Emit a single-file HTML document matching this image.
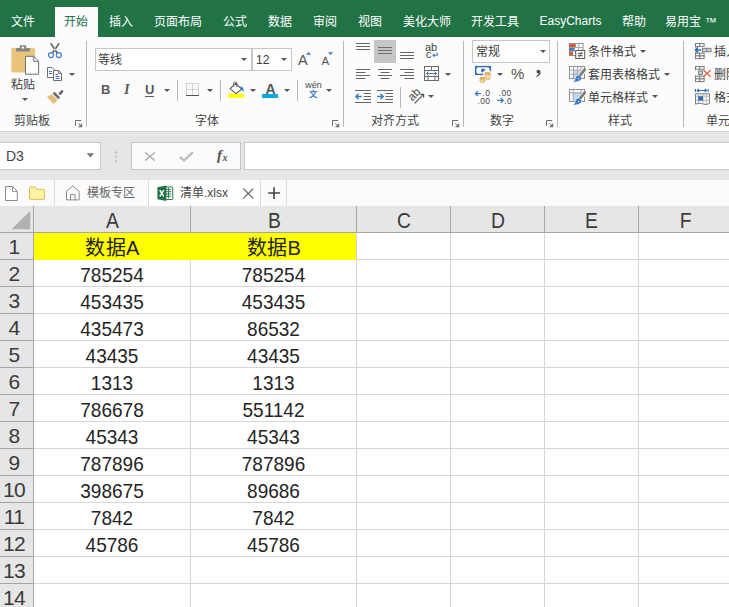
<!DOCTYPE html>
<html lang="zh-CN">
<head>
<meta charset="utf-8">
<title>清单.xlsx - Excel</title>
<style>
*{box-sizing:border-box;margin:0;padding:0}
html,body{width:729px;height:607px;overflow:hidden;background:#fff}
body{font-family:"Liberation Sans",sans-serif;font-size:12px;color:#262626;position:relative}
.abs,.abs>*{position:absolute}
#app{position:absolute;left:0;top:0;width:729px;height:607px;overflow:hidden}
#app div,#app span,#app svg{position:absolute}
/* title/tab bar */
#tabbar{left:0;top:0;width:729px;height:37px;background:#217346}
.tab{top:7px;height:30px;line-height:31px;color:#fff;font-size:12px;white-space:nowrap;text-align:center}
.tab.on{background:#fcfcfc;color:#217346}
/* ribbon */
#ribbon{left:0;top:37px;width:729px;height:94px;background:#fcfcfc}
.vsep{width:1px;background:#bababa}
.glabel{top:114px;height:14px;line-height:14px;font-size:12px;color:#444;white-space:nowrap;text-align:center}
.rtxt{font-size:12px;line-height:14px;color:#3c3c3c;white-space:nowrap}
.dec{font-size:8.5px;line-height:8px;color:#444;letter-spacing:0.4px}
.box{background:#fff;border:1px solid #c6c6c6}
.dd{width:0;height:0;border-left:3px solid transparent;border-right:3px solid transparent;border-top:3px solid #555}
/* formula bar */
#fbar{left:0;top:131px;width:729px;height:49px;background:#e6e6e6}
/* doc tabs */
#dtabs{left:0;top:180px;width:729px;height:26px;background:#fbfbfb}
/* grid */
#grid{left:0;top:206px;width:729px;height:401px;background:#fff}
.ch{top:0;height:27px;line-height:29px;padding-left:2px;background:#e6e6e6;border-right:1px solid #a6a6a6;border-bottom:1px solid #a6a6a6;font-size:22px;color:#3a3a3a;text-align:center}
#app .ch span{position:static;display:inline-block;transform:scaleX(0.88)}
.rh{left:-5px;width:39px;height:27px;line-height:28px;background:#e6e6e6;border-right:1px solid #a6a6a6;border-bottom:1px solid #a6a6a6;font-size:21px;letter-spacing:-0.6px;color:#3a3a3a;text-align:center}
.hl{left:34px;width:695px;height:1px;background:#d6d6d6}
.vl{top:27px;width:1px;height:374px;background:#d6d6d6}
.c{height:27px;line-height:30px;font-size:21px;color:#242424;text-align:center;white-space:nowrap;transform:scaleX(0.905)}
.c.h{font-size:20px;line-height:31px;transform:none;letter-spacing:0.4px;padding-left:1px}
.ca{left:34px;width:156px}
.cb{left:191px;width:165px}
</style>
</head>
<body>
<div id="app">

<!-- ===== tab bar ===== -->
<div id="tabbar">
  <div class="tab" style="left:0;width:47px;padding-right:1px">文件</div>
  <div class="tab on" style="left:55px;width:43px;padding-right:2px">开始</div>
  <div class="tab" style="left:99px;width:44px">插入</div>
  <div class="tab" style="left:143px;width:69px">页面布局</div>
  <div class="tab" style="left:212px;width:45px">公式</div>
  <div class="tab" style="left:257px;width:45px">数据</div>
  <div class="tab" style="left:302px;width:45px">审阅</div>
  <div class="tab" style="left:347px;width:45px">视图</div>
  <div class="tab" style="left:392px;width:69px">美化大师</div>
  <div class="tab" style="left:461px;width:68px">开发工具</div>
  <div class="tab" style="left:529px;width:83px;line-height:28px">EasyCharts</div>
  <div class="tab" style="left:612px;width:44px">帮助</div>
  <div class="tab" style="left:656px;width:70px">易用宝 ™</div>
</div>

<!-- ===== ribbon ===== -->
<div id="ribbon"></div>
<div id="rb" style="left:0;top:0;width:729px;height:131px">
<!-- clipboard group -->
<svg style="left:10px;top:43px" width="31" height="33" viewBox="0 0 31 33">
  <rect x="1.3" y="4.9" width="23.8" height="24.7" rx="1.6" fill="#ebc47c"/>
  <path d="M6 8.5V5.9Q6 4.9 7 4.9H9.7V3.3Q9.7 2.3 10.7 2.3H15.3Q16.3 2.3 16.3 3.3V4.9H19Q20 4.9 20 5.9V8.5Z" fill="#868686"/>
  <rect x="11.8" y="3.6" width="2.4" height="2" fill="#fcfcfc"/>
  <path d="M15.5 13.3H23.8L28.6 18.3V31.2H15.5Z" fill="#fff" stroke="#6e6e6e" stroke-width="1"/>
  <path d="M23.8 13.3V18.3H28.6" fill="none" stroke="#6e6e6e" stroke-width="1"/>
</svg>
<div class="rtxt" style="left:10px;top:78px;width:26px;text-align:center">粘贴</div>
<div class="dd" style="left:21.6px;top:98px"></div>
<!-- scissors -->
<svg style="left:47px;top:42px" width="17" height="17" viewBox="0 0 17 17">
  <path d="M2.9 1.6L4.3 0.9L11 10.4L9.4 11.2Z M12.9 1.6L11.5 0.9L4.8 10.4L6.4 11.2Z" fill="#5c5c5c"/>
  <circle cx="4" cy="13.1" r="2.5" fill="none" stroke="#3b7bc8" stroke-width="1.2"/>
  <circle cx="11.8" cy="13.1" r="2.5" fill="none" stroke="#3b7bc8" stroke-width="1.2"/>
</svg>
<!-- copy -->
<svg style="left:46px;top:66px" width="17" height="16" viewBox="0 0 17 16">
  <path d="M1.5 1.5H6.2L8.7 4V11.5H1.5Z" fill="#fff" stroke="#6e6e6e"/>
  <path d="M3 5.5H6M3 7.5H6" stroke="#3b7bc8" stroke-width="1"/>
  <path d="M7.5 4.5H12.6L15.5 7.4V14.5H7.5Z" fill="#fff" stroke="#6e6e6e"/>
  <path d="M12.6 4.5V7.4H15.5" fill="none" stroke="#6e6e6e"/>
  <path d="M9.5 8.5H12M9.5 10.5H13.5M9.5 12.5H13.5" stroke="#3b7bc8" stroke-width="1"/>
</svg>
<div class="dd" style="left:69px;top:73px"></div>
<!-- format painter -->
<svg style="left:46px;top:88px" width="19" height="17" viewBox="0 0 19 17">
  <path d="M12.4 5.4L15.2 2.5Q16.1 1.6 17 2.5Q17.9 3.4 17 4.3L14.2 7.2Z" fill="#5f5f5f"/>
  <path d="M6.6 5.6L8.6 3.7L14.2 9.4L12.2 11.3Z" fill="#6e6e6e"/>
  <path d="M6 6.2L11.6 11.9L7.6 16L0.9 8.7Z" fill="#e8bf7a"/>
</svg>
<div class="glabel" style="left:12px;top:114px;width:40px">剪贴板</div>
<svg class="lnch" style="left:75px;top:120px" width="8" height="8" viewBox="0 0 8 8"><path d="M0.5 5.8V0.5H6.2" fill="none" stroke="#6e6e6e" stroke-width="1"/><path d="M3.4 3.4L6 6" fill="none" stroke="#6e6e6e" stroke-width="1"/><path d="M7.2 3V7.2H3Z" fill="#6e6e6e"/></svg>
<div class="vsep" style="left:86px;top:41px;height:86px"></div>
<!-- font group -->
<div class="box" style="left:95px;top:48px;width:157px;height:23px"></div>
<div class="rtxt" style="left:98px;top:53px">等线</div>
<div class="dd" style="left:241px;top:58px"></div>
<div class="box" style="left:252px;top:48px;width:40px;height:23px"></div>
<div class="rtxt" style="left:256px;top:53px">12</div>
<div class="dd" style="left:281px;top:58px"></div>
<div class="rtxt" style="left:298px;top:51px;font-size:14.5px;line-height:18px;color:#555">A</div>
<svg style="left:306px;top:51px" width="6" height="4" viewBox="0 0 6 4"><path d="M0 3.8L2.6 0.9L5.2 3.8Z" fill="#3b7bc8"/></svg>
<div class="rtxt" style="left:321.5px;top:53px;font-size:11.5px;line-height:16px;color:#555">A</div>
<svg style="left:327.6px;top:52px" width="6" height="4" viewBox="0 0 6 4"><path d="M0 0.2L2.6 3.1L5.2 0.2Z" fill="#3b7bc8"/></svg>
<div class="rtxt" style="left:101px;top:82px;font-size:13px;line-height:16px;font-weight:bold;color:#5a5a5a">B</div>
<div class="rtxt" style="left:124px;top:81px;font-size:14.5px;line-height:17px;font-weight:bold;font-style:italic;font-family:'Liberation Serif',serif;color:#5a5a5a">I</div>
<div class="rtxt" style="left:145px;top:82px;font-size:13px;line-height:16px;font-weight:bold;color:#5a5a5a;border-bottom:1px solid #5a5a5a;height:15px">U</div>
<div class="dd" style="left:164px;top:89px"></div>
<div class="vsep" style="left:177px;top:80px;height:21px"></div>
<svg style="left:185px;top:82px" width="15" height="15" viewBox="0 0 15 15">
  <path d="M1.5 1.5H13.5M1.5 7.5H13.5M1.5 1.5V13.5M7.5 1.5V13.5M13.5 1.5V13.5" stroke="#a8a8a8" stroke-width="1" stroke-dasharray="1 1" fill="none"/>
  <path d="M1 13.5H14" stroke="#555" stroke-width="1"/>
</svg>
<div class="dd" style="left:207px;top:89px"></div>
<div class="vsep" style="left:220px;top:80px;height:21px"></div>
<svg style="left:227px;top:81px" width="18" height="18" viewBox="0 0 18 18">
  <rect x="0.9" y="12.7" width="16.2" height="4.1" fill="#ffff00"/>
  <path d="M8.7 2.3L14.6 8.2L9 12.6L3.2 7.7Z" fill="#fff" stroke="#555" stroke-width="1.1" stroke-linejoin="round"/>
  <path d="M6.6 5.6V2.2Q6.6 1.2 7.6 1.2H8.9Q9.9 1.2 9.9 2.2V6" fill="none" stroke="#666" stroke-width="1"/>
  <path d="M13.6 4.9Q17.3 6.4 16.7 10.9Q15.4 8.8 13.4 8.2Z" fill="#3b7bc8"/>
</svg>
<div class="dd" style="left:250px;top:89px"></div>
<div class="rtxt" style="left:265.5px;top:80px;font-size:14px;line-height:18px;font-weight:bold;color:#555">A</div>
<div style="left:262px;top:94px;width:16px;height:4px;background:#00a9ea"></div>
<div class="dd" style="left:284px;top:89px"></div>
<div class="vsep" style="left:297px;top:80px;height:21px"></div>
<div class="rtxt" style="left:305px;top:80px;font-size:9px;line-height:11px;color:#444;width:17px;text-align:center">wén</div>
<div class="rtxt" style="left:305px;top:90px;font-size:8.5px;line-height:9px;color:#3b7bc8;width:17px;text-align:center;font-weight:bold">文</div>
<div class="dd" style="left:326px;top:89px"></div>
<div class="glabel" style="left:187px;top:114px;width:40px">字体</div>
<svg class="lnch" style="left:332px;top:120px" width="8" height="8" viewBox="0 0 8 8"><path d="M0.5 5.8V0.5H6.2" fill="none" stroke="#6e6e6e" stroke-width="1"/><path d="M3.4 3.4L6 6" fill="none" stroke="#6e6e6e" stroke-width="1"/><path d="M7.2 3V7.2H3Z" fill="#6e6e6e"/></svg>
<div class="vsep" style="left:343px;top:41px;height:86px"></div>
<!-- alignment group -->
<div style="left:374px;top:40px;width:22px;height:23px;background:#c6c6c6"></div>
<svg style="left:344px;top:38px" width="120" height="92" viewBox="344 38 120 92">
  <g stroke="#666" stroke-width="1" fill="none">
  <path d="M356 43.5H370M356 46.5H370M356 49.5H370"/>
  <path d="M378 47.5H392M378 50.5H392M378 53.5H392" stroke="#6e6e6e"/>
  <path d="M400 52.5H414M400 55.5H414M400 58.5H414"/>
  <path d="M356 69.5H370M356 72.5H365.5M356 75.5H370M356 78.5H365.5"/>
  <path d="M378 69.5H392M380.5 72.5H389.5M378 75.5H392M380.5 78.5H389.5"/>
  <path d="M400 69.5H414M404.5 72.5H414M400 75.5H414M404.5 78.5H414"/>
  <path d="M355 90.5H371M363.5 93.5H371M363.5 96.5H371M363.5 99.5H371M355 102.5H371"/>
  <path d="M377 90.5H393M385.5 93.5H393M385.5 96.5H393M385.5 99.5H393M377 102.5H393"/>
  </g>
  <g stroke="#3b7bc8" stroke-width="1.4" fill="none">
  <path d="M361.8 96.5H355.8M358.6 93.7L355.8 96.5L358.6 99.3"/>
  <path d="M377 96.5H383.2M380.4 93.7L383.2 96.5L380.4 99.3"/>
  </g>
  <!-- merge -->
  <g stroke="#6a6a6a" stroke-width="1" fill="#fff">
  <rect x="424.5" y="66.5" width="14" height="14"/>
  <path d="M424.5 70.5H438.5M424.5 76.5H438.5M431.5 66.5V70.5M428 76.5V80.5M435 76.5V80.5" fill="none"/>
  </g>
  <path d="M426.5 73.5H436.5M428.5 71.5L426.5 73.5L428.5 75.5M434.5 71.5L436.5 73.5L434.5 75.5" stroke="#3b7bc8" stroke-width="1" fill="none"/>
  <!-- wrap arrow -->
  <path d="M437.2 52.6V55.2H433M434.6 53.6L433 55.2L434.6 56.8" stroke="#3b7bc8" stroke-width="1.1" fill="none"/>
  <!-- orientation arrow -->
  <path d="M414.6 103.4L423.3 94.7M420.4 94.4H423.6V97.6" stroke="#555" stroke-width="1.2" fill="none"/>
</svg>
<div class="rtxt" style="left:425px;top:42px;font-size:11px;line-height:11px;color:#444">ab</div>
<div class="rtxt" style="left:426px;top:49px;font-size:11px;line-height:11px;color:#444">c</div>
<div class="rtxt" style="left:408px;top:88.5px;font-size:11.5px;line-height:11px;color:#444;transform:rotate(-45deg);transform-origin:50% 50%">ab</div>
<div class="dd" style="left:445px;top:73px"></div>
<div class="vsep" style="left:400px;top:87px;height:21px"></div>
<div class="dd" style="left:428px;top:95px"></div>
<div class="glabel" style="left:365px;top:114px;width:60px">对齐方式</div>
<svg class="lnch" style="left:452px;top:120px" width="8" height="8" viewBox="0 0 8 8"><path d="M0.5 5.8V0.5H6.2" fill="none" stroke="#6e6e6e" stroke-width="1"/><path d="M3.4 3.4L6 6" fill="none" stroke="#6e6e6e" stroke-width="1"/><path d="M7.2 3V7.2H3Z" fill="#6e6e6e"/></svg>
<div class="vsep" style="left:463px;top:41px;height:86px"></div>
<!-- number group -->
<div class="box" style="left:472px;top:40px;width:78px;height:23px"></div>
<div class="rtxt" style="left:476px;top:45px">常规</div>
<div class="dd" style="left:540px;top:50px"></div>
<svg style="left:474px;top:65px" width="19" height="18" viewBox="0 0 19 18">
  <rect x="1.7" y="1.6" width="14.6" height="7.8" fill="#fff" stroke="#2f6db5" stroke-width="1.4"/>
  <path d="M1.7 1.6h2.6l-2.6 2.4zM16.3 1.6h-2.6l2.6 2.4zM1.7 9.4h2.6l-2.6 -2.4z" fill="#2f6db5"/>
  <circle cx="9" cy="5.4" r="2" fill="#2f6db5"/>
  <rect x="9.2" y="6.2" width="9" height="5" fill="#fcfcfc"/>
  <g fill="none" stroke="#e3b25c" stroke-width="1">
  <ellipse cx="13.6" cy="8.6" rx="3.1" ry="1" fill="#e3b25c"/>
  <path d="M10.2 10.4Q13.6 12.2 17 10.4M10.6 12.4Q13.6 13.9 17 12.4M12 14.2Q14 15 16 14.2"/>
  <ellipse cx="8.5" cy="13.5" rx="3" ry="1" fill="#e3b25c"/>
  <path d="M5.2 15.2Q8.5 17 11.8 15.2M6 16.9Q8.5 17.9 11 16.9"/>
  </g>
</svg>
<div class="dd" style="left:497px;top:73px"></div>
<div class="rtxt" style="left:511px;top:65px;font-size:15px;line-height:18px;color:#555">%</div>
<svg style="left:535px;top:69px" width="7" height="9" viewBox="0 0 7 9"><path d="M3.4 0.8Q5.6 0.8 5.6 3.2Q5.6 6.2 1.6 8L1.2 7.2Q3.4 6 3.5 4.6Q1.4 4.6 1.4 2.8Q1.4 0.8 3.4 0.8Z" fill="#555"/></svg>
<svg style="left:474px;top:89px" width="40" height="16" viewBox="474 89 40 16">
  <g stroke="#3b7bc8" stroke-width="1.3" fill="none">
  <path d="M481 93.6H475.4M477.8 91.2L475.4 93.6L477.8 96"/>
  <path d="M497.2 100.4H503.2M500.8 98L503.2 100.4L500.8 102.8"/>
  </g>
</svg>
<div class="rtxt dec" style="left:482.5px;top:89px">.0</div>
<div class="rtxt dec" style="left:477.4px;top:96.5px">.00</div>
<div class="rtxt dec" style="left:498.7px;top:89px">.00</div>
<div class="rtxt dec" style="left:504.2px;top:96.5px">.0</div>
<div class="glabel" style="left:482px;top:114px;width:40px">数字</div>
<svg class="lnch" style="left:546px;top:120px" width="8" height="8" viewBox="0 0 8 8"><path d="M0.5 5.8V0.5H6.2" fill="none" stroke="#6e6e6e" stroke-width="1"/><path d="M3.4 3.4L6 6" fill="none" stroke="#6e6e6e" stroke-width="1"/><path d="M7.2 3V7.2H3Z" fill="#6e6e6e"/></svg>
<div class="vsep" style="left:557px;top:41px;height:86px"></div>
<!-- styles group -->
<svg style="left:568px;top:42px" width="18" height="18" viewBox="0 0 18 18">
  <rect x="1.5" y="1.5" width="13.5" height="12" fill="#fff" stroke="#8f8f8f"/>
  <path d="M10.8 1.5V8M1.5 5.5H15M1.5 9.3H8" stroke="#a8a8a8" fill="none"/>
  <rect x="1" y="2.1" width="6.8" height="2.9" fill="#d9552f"/>
  <rect x="1" y="5.9" width="5.6" height="3" fill="#3b7bc8"/>
  <rect x="1" y="9.7" width="4" height="3.3" fill="#d9552f"/>
  <rect x="7.7" y="8.5" width="9" height="8" fill="#fff" stroke="#5a5a5a"/>
  <path d="M9.8 11.4H14.8M9.8 13.7H14.8M13.7 9.9L11 15.2" stroke="#444" stroke-width="0.9" fill="none"/>
</svg>
<div class="rtxt" style="left:588px;top:45px">条件格式</div>
<div class="dd" style="left:640px;top:50px"></div>
<svg style="left:568px;top:65px" width="18" height="18" viewBox="0 0 18 18">
  <rect x="1.5" y="1.5" width="15" height="12" fill="#fff" stroke="#8f8f8f"/>
  <rect x="5.5" y="5.2" width="7.5" height="8" fill="#c9daee"/>
  <path d="M5.5 1.5V13.5M9.5 1.5V13.5M13 1.5V13.5M1.5 5.2H16.5M1.5 9.2H16.5" stroke="#a2a2a2" fill="none"/>
  <path d="M10.4 12.6L16.9 4.4" stroke="#fcfcfc" stroke-width="4.6" fill="none"/>
  <path d="M10.6 12.2L16.7 4.6" stroke="#7d7d7d" stroke-width="2.8" stroke-linecap="round" fill="none"/>
  <path d="M10.6 10L14 12.8Q13.4 16.9 4.8 17.2Q7.6 15.2 7.4 12.8Q8.4 9.8 10.6 10Z" fill="#3b7bc8" stroke="#fcfcfc" stroke-width="0.5"/>
  <circle cx="10.6" cy="13.6" r="0.7" fill="#e8f0fa"/>
</svg>
<div class="rtxt" style="left:588px;top:68px">套用表格格式</div>
<div class="dd" style="left:664px;top:73px"></div>
<svg style="left:568px;top:88px" width="18" height="18" viewBox="0 0 18 18">
  <rect x="1.5" y="1.5" width="15" height="12" fill="#fff" stroke="#8f8f8f"/>
  <rect x="5.2" y="4.8" width="7.8" height="8.5" fill="#c3d5ec"/>
  <path d="M5.2 1.5V13.5M13 1.5V13.5M1.5 4.8H16.5" stroke="#a2a2a2" fill="none"/>
  <path d="M10.4 12.6L16.9 4.4" stroke="#fcfcfc" stroke-width="4.6" fill="none"/>
  <path d="M10.6 12.2L16.7 4.6" stroke="#7d7d7d" stroke-width="2.8" stroke-linecap="round" fill="none"/>
  <path d="M10.6 10L14 12.8Q13.4 16.9 4.8 17.2Q7.6 15.2 7.4 12.8Q8.4 9.8 10.6 10Z" fill="#3b7bc8" stroke="#fcfcfc" stroke-width="0.5"/>
  <circle cx="10.6" cy="13.6" r="0.7" fill="#e8f0fa"/>
</svg>
<div class="rtxt" style="left:588px;top:91px">单元格样式</div>
<div class="dd" style="left:652px;top:95px"></div>
<div class="glabel" style="left:600px;top:114px;width:40px">样式</div>
<div class="vsep" style="left:683px;top:41px;height:86px"></div>
<!-- cells group -->
<svg style="left:694px;top:42px" width="18" height="18" viewBox="0 0 18 18">
  <g fill="#fff" stroke="#7a7a7a">
  <rect x="1.5" y="1.5" width="4.3" height="2.9"/><rect x="5.8" y="1.5" width="4.3" height="2.9"/>
  <rect x="1.5" y="11.2" width="4.3" height="2.7"/><rect x="5.8" y="11.2" width="4.3" height="2.7"/>
  <rect x="1.5" y="13.9" width="4.3" height="2.7"/><rect x="5.8" y="13.9" width="4.3" height="2.7"/>
  <path d="M1.5 4.4V5.6M1.5 10.2V11.2" fill="none"/>
  </g>
  <rect x="8.4" y="6.3" width="8.6" height="3.5" fill="#c3d5ec" stroke="#7a7a7a"/>
  <path d="M12.7 6.3V9.8" stroke="#7a7a7a" fill="none"/>
  <path d="M7.2 8H1.4M4 5.4L1.4 8L4 10.6" stroke="#2f6db5" stroke-width="1.5" fill="none"/>
</svg>
<div class="rtxt" style="left:714px;top:45px">插入</div>
<svg style="left:694px;top:65px" width="18" height="18" viewBox="0 0 18 18">
  <g fill="#fff" stroke="#7a7a7a">
  <rect x="1.5" y="1.5" width="4.3" height="2.7"/><rect x="5.8" y="1.5" width="4.3" height="2.7"/>
  <rect x="1.5" y="11.2" width="4.3" height="2.7"/><rect x="5.8" y="11.2" width="4.3" height="2.7"/>
  <rect x="1.5" y="13.9" width="4.3" height="2.7"/><rect x="5.8" y="13.9" width="4.3" height="2.7"/>
  <path d="M1.5 4.2V5.4M1.5 10.2V11.2" fill="none"/>
  </g>
  <rect x="4.6" y="6" width="3.8" height="3.5" fill="#c3d5ec" stroke="#7a7a7a"/>
  <path d="M9.4 5L16.6 11.8M16.6 5L9.4 11.8" stroke="#dc6a48" stroke-width="1.5" fill="none"/>
</svg>
<div class="rtxt" style="left:714px;top:68px">删除</div>
<svg style="left:694px;top:88px" width="18" height="18" viewBox="0 0 18 18">
  <path d="M1.4 0.9V4.1M14.2 0.9V4.1M3 2.5H12.6M4.8 1L3.2 2.5L4.8 4M10.8 1L12.4 2.5L10.8 4" stroke="#2f6db5" stroke-width="1.1" fill="none"/>
  <path d="M1.5 5.8H15.5V15.4Q12 17.4 8.5 15.8Q5 14.4 1.5 16.2Z" fill="#fff" stroke="#7a7a7a"/>
  <path d="M4.2 5.8V15M9 5.8V15.6M12.2 5.8V16M1.5 8.2H15.5M1.5 12.6H15.5" stroke="#b0b0b0" stroke-width="0.9" fill="none"/>
  <rect x="4.2" y="8.2" width="4.8" height="4.4" fill="#2f6db5"/>
</svg>
<div class="rtxt" style="left:714px;top:91px">格式</div>
<div class="glabel" style="left:706px;top:114px;width:36px;text-align:left">单元格</div>
</div>

<!-- ===== formula bar ===== -->
<div id="fbar">
<div style="left:0;top:0;width:729px;height:1px;background:#cfcfcf"></div>
<div class="box" style="left:-1px;top:11px;width:102px;height:28px;border-color:#c8c8c8"></div>
<div class="rtxt" style="left:6px;top:16px;font-size:14px;line-height:18px;color:#444">D3</div>
<svg style="left:86px;top:22px" width="9" height="5" viewBox="0 0 9 5"><path d="M0.6 0.2H8.2L4.4 4.4Z" fill="#777"/></svg>
<svg style="left:114px;top:20px" width="4" height="12" viewBox="0 0 4 12"><path d="M1 0.4h2v2h-2zM1 4.8h2v2h-2zM1 9.2h2v2h-2z" fill="#bdbdbd"/></svg>
<div class="box" style="left:131px;top:11px;width:110px;height:28px;border-color:#c8c8c8;background:#fbfbfb"></div>
<svg style="left:144px;top:20px" width="13" height="11" viewBox="0 0 13 11"><path d="M1.2 1.4L10.8 9.6M10.8 1.4L1.2 9.6" stroke="#b6b6b6" stroke-width="1.6" fill="none"/></svg>
<svg style="left:179px;top:20px" width="16" height="11" viewBox="0 0 16 11"><path d="M1 6L5 9.4L14 1.2" stroke="#bdbdbd" stroke-width="2.3" fill="none"/></svg>
<div class="rtxt" style="left:217px;top:15px;font-family:'Liberation Serif',serif;font-style:italic;font-weight:bold;font-size:15px;line-height:18px;color:#555">f</div>
<div class="rtxt" style="left:222.5px;top:19.5px;font-family:'Liberation Serif',serif;font-style:italic;font-weight:bold;font-size:10px;line-height:14px;color:#555">x</div>
<div class="box" style="left:244px;top:11px;width:490px;height:28px;border-color:#c8c8c8"></div>
</div>

<!-- ===== document tabs ===== -->
<div id="dtabs">
<svg style="left:4px;top:5px" width="15" height="17" viewBox="0 0 15 17"><path d="M1.5 1.5H8.5L13.3 6.3V15.5H1.5Z" fill="#fff" stroke="#8c8c8c"/><path d="M8.5 1.5V6.3H13.3" fill="none" stroke="#8c8c8c"/></svg>
<svg style="left:28px;top:6px" width="18" height="15" viewBox="0 0 18 15"><path d="M1.5 2.3Q1.5 1 2.8 1H6.6Q7.6 1 8 2L8.5 3.4H15Q16.4 3.4 16.4 4.8V12Q16.4 13.4 15 13.4H2.9Q1.5 13.4 1.5 12Z" fill="#fff3a6" stroke="#e2bb55"/></svg>
<div style="left:54px;top:0;width:1px;height:25px;background:#dcdcdc"></div>
<svg style="left:65px;top:5px" width="16" height="16" viewBox="0 0 16 16"><path d="M1.5 6.2L7.8 1L14.1 6.2V14.9H1.5Z" fill="none" stroke="#8c8c8c" stroke-width="1"/><path d="M5.5 14.9V9.5H10.1V14.9" fill="none" stroke="#8c8c8c" stroke-width="1"/></svg>
<div class="rtxt" style="left:87px;top:6px;color:#666">模板专区</div>
<div style="left:148px;top:0;width:113px;height:26px;background:#fff;border-left:1px solid #dcdcdc;border-right:1px solid #dcdcdc"></div>
<svg style="left:157px;top:5px" width="16.5" height="16.5" viewBox="0 0 17 17">
  <rect x="7" y="2" width="9.2" height="13" rx="0.8" fill="#fff" stroke="#217346" stroke-width="1"/>
  <path d="M9 4.5H14.6M9 6.9H14.6M9 9.3H14.6M9 11.7H14.6M11.8 3V13.8" stroke="#217346" stroke-width="1" fill="none"/>
  <path d="M0.4 2.2L9.6 0.4V16.6L0.4 14.8Z" fill="#217346"/>
  <path d="M2.8 5.2L7 11.8M7 5.2L2.8 11.8" stroke="#fff" stroke-width="1.5" fill="none"/>
</svg>
<div class="rtxt" style="left:180px;top:6px;color:#444">清单.xlsx</div>
<svg style="left:242px;top:7px" width="13" height="13" viewBox="0 0 13 13"><path d="M1.4 1.6L11.2 11.4M11.2 1.6L1.4 11.4" stroke="#555" stroke-width="1.1" fill="none"/></svg>
<svg style="left:267px;top:6px" width="14" height="14" viewBox="0 0 14 14"><path d="M7 1.2V13M1.2 7H13" stroke="#444" stroke-width="1.6" fill="none"/></svg>
<div style="left:286px;top:0;width:1px;height:25px;background:#dcdcdc"></div>
</div>

<!-- ===== grid ===== -->
<div id="grid">
<div class="ch" style="left:0;width:34px"></div>
<svg style="left:11px;top:5px" width="20" height="19" viewBox="0 0 20 19"><path d="M19.2 0V18.2H0.6Z" fill="#b1b1b1"/></svg>
<div class="ch" style="left:34px;width:157px;padding-left:0"><span>A</span></div>
<div class="ch" style="left:191px;width:166px"><span>B</span></div>
<div class="ch" style="left:357px;width:94px;padding-left:0"><span>C</span></div>
<div class="ch" style="left:451px;width:94px;padding-left:0"><span>D</span></div>
<div class="ch" style="left:545px;width:94px;padding-left:0"><span>E</span></div>
<div class="ch" style="left:639px;width:94px;padding-left:0"><span>F</span></div>
<div style="left:34px;top:27px;width:323px;height:27px;background:#ffff00"></div>
<div class="hl" style="top:53px;left:357px"></div>
<div class="hl" style="top:80px"></div>
<div class="hl" style="top:107px"></div>
<div class="hl" style="top:134px"></div>
<div class="hl" style="top:161px"></div>
<div class="hl" style="top:188px"></div>
<div class="hl" style="top:215px"></div>
<div class="hl" style="top:242px"></div>
<div class="hl" style="top:269px"></div>
<div class="hl" style="top:296px"></div>
<div class="hl" style="top:323px"></div>
<div class="hl" style="top:350px"></div>
<div class="hl" style="top:377px"></div>
<div class="hl" style="top:404px"></div>
<div class="vl" style="left:190px;top:54px"></div>
<div class="vl" style="left:356px;top:27px"></div>
<div class="vl" style="left:450px;top:27px"></div>
<div class="vl" style="left:544px;top:27px"></div>
<div class="vl" style="left:638px;top:27px"></div>
<div class="rh" style="top:27px">1</div>
<div class="rh" style="top:54px">2</div>
<div class="rh" style="top:81px">3</div>
<div class="rh" style="top:108px">4</div>
<div class="rh" style="top:135px">5</div>
<div class="rh" style="top:162px">6</div>
<div class="rh" style="top:189px">7</div>
<div class="rh" style="top:216px">8</div>
<div class="rh" style="top:243px">9</div>
<div class="rh" style="top:270px">10</div>
<div class="rh" style="top:297px">11</div>
<div class="rh" style="top:324px">12</div>
<div class="rh" style="top:351px">13</div>
<div class="rh" style="top:378px">14</div>
<div class="c h ca" style="top:27px">数据A</div>
<div class="c h cb" style="top:27px">数据B</div>
<div class="c ca" style="top:54px">785254</div>
<div class="c cb" style="top:54px">785254</div>
<div class="c ca" style="top:81px">453435</div>
<div class="c cb" style="top:81px">453435</div>
<div class="c ca" style="top:108px">435473</div>
<div class="c cb" style="top:108px">86532</div>
<div class="c ca" style="top:135px">43435</div>
<div class="c cb" style="top:135px">43435</div>
<div class="c ca" style="top:162px">1313</div>
<div class="c cb" style="top:162px">1313</div>
<div class="c ca" style="top:189px">786678</div>
<div class="c cb" style="top:189px">551142</div>
<div class="c ca" style="top:216px">45343</div>
<div class="c cb" style="top:216px">45343</div>
<div class="c ca" style="top:243px">787896</div>
<div class="c cb" style="top:243px">787896</div>
<div class="c ca" style="top:270px">398675</div>
<div class="c cb" style="top:270px">89686</div>
<div class="c ca" style="top:297px">7842</div>
<div class="c cb" style="top:297px">7842</div>
<div class="c ca" style="top:324px">45786</div>
<div class="c cb" style="top:324px">45786</div>
</div>

</div>
</body>
</html>
